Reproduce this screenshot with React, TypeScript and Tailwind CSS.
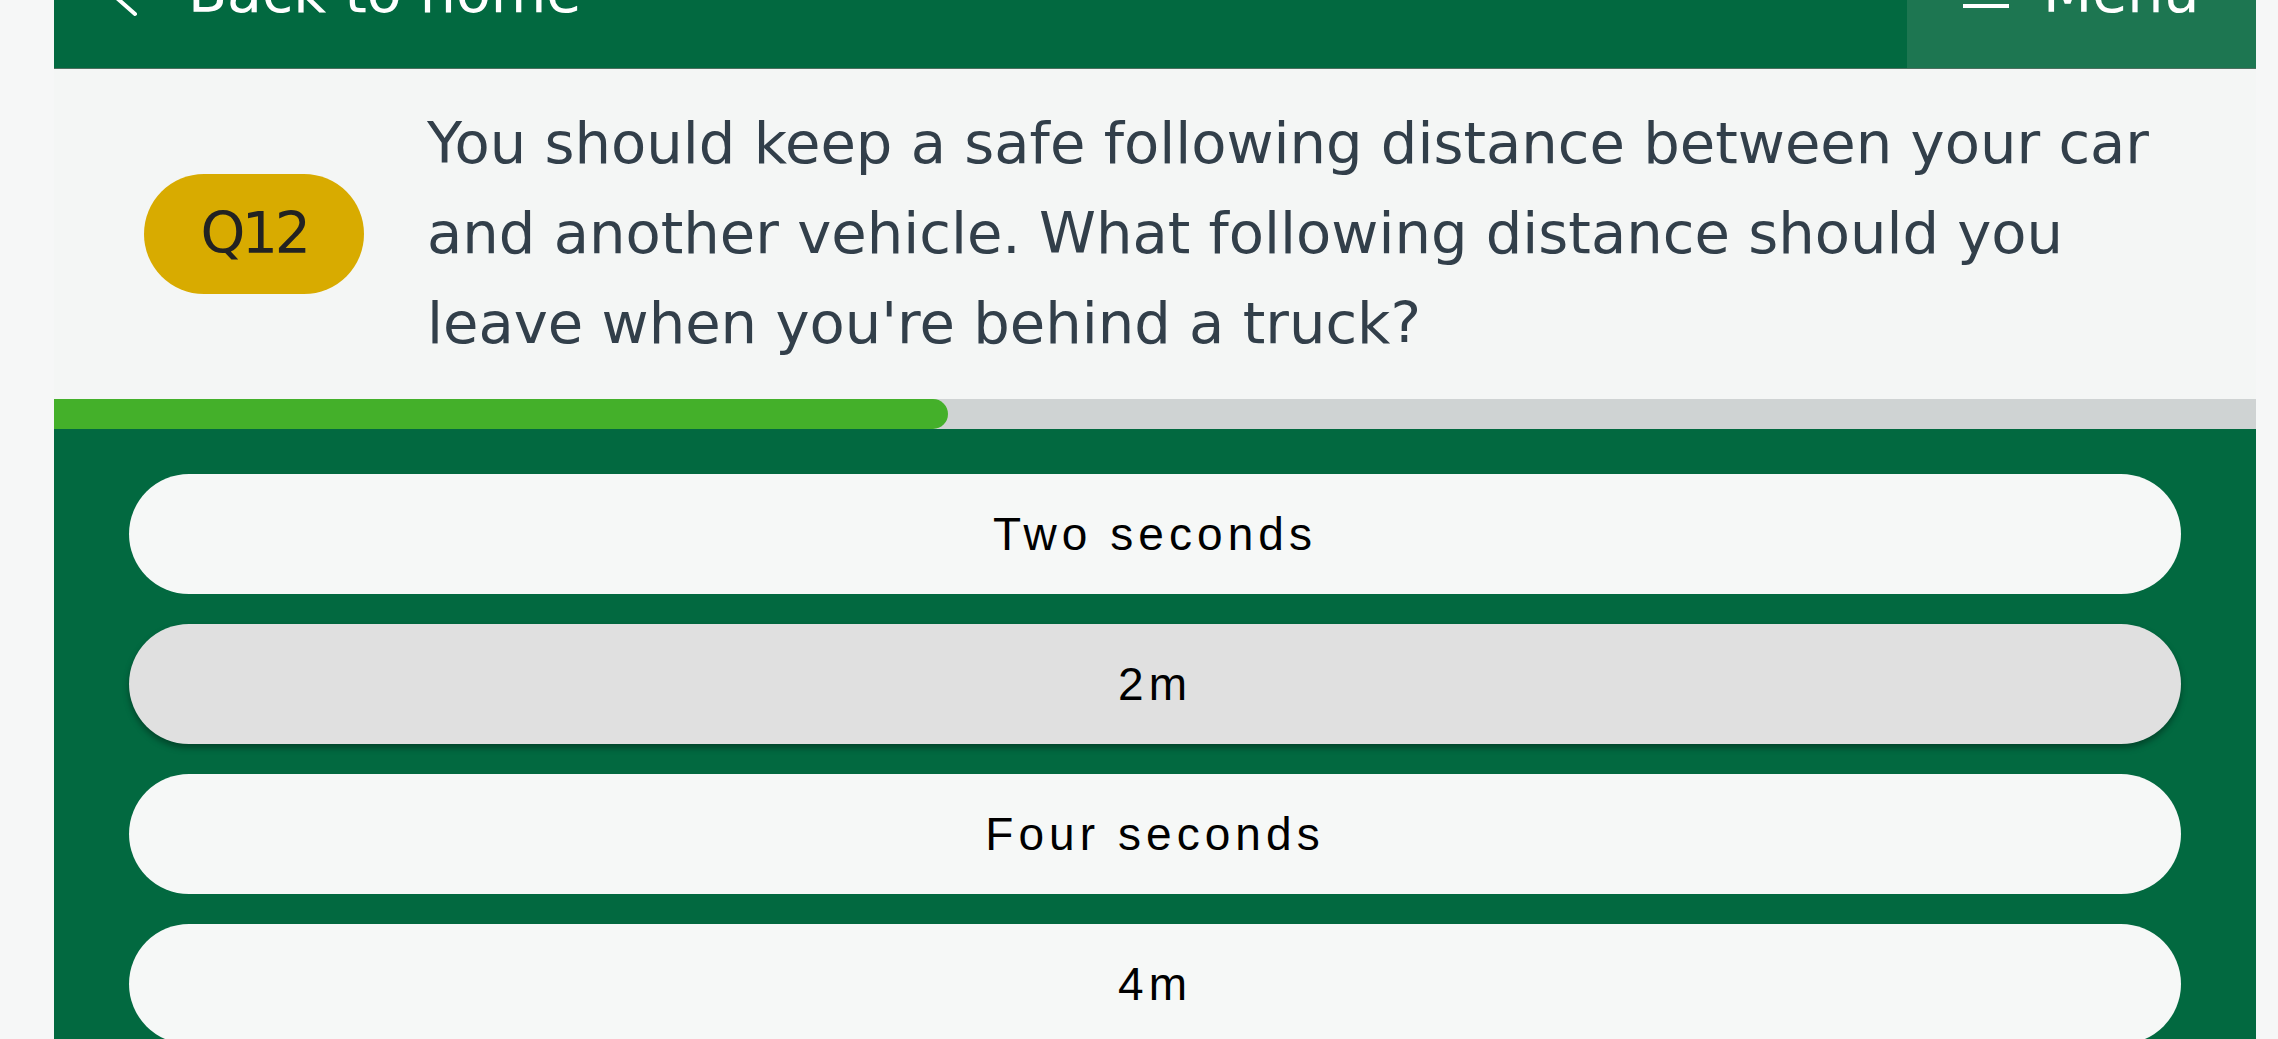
const ANSWERS = [
  { id: "a", label: "Two seconds" },
  { id: "b", label: "2m", selected: true },
  { id: "c", label: "Four seconds" },
  { id: "d", label: "4m" },
];

const FONT = "font-['DejaVu_Sans','Liberation_Sans',sans-serif]";

function Header() {
  return (
    <header className="flex h-[69px] items-start justify-between overflow-hidden border-b border-[#4f6f60] bg-[#026940] text-white">
      <a
        href="#"
        className={`-mt-[40px] flex items-center gap-[50px] pl-[52px] text-[57px] leading-[64px] ${FONT}`}
      >
        <svg width="32" height="50" viewBox="0 0 32 50" fill="none">
          <polyline
            points="29,3 4,25 29,47"
            stroke="white"
            strokeWidth="4"
            strokeLinecap="round"
            strokeLinejoin="round"
          />
        </svg>
        <span>Back to home</span>
      </a>
      <button
        type="button"
        className="flex h-full w-[349px] items-start bg-[#1d7651] pl-[56px]"
      >
        <span
          className={`-mt-[40px] flex items-center gap-[34px] text-[57px] leading-[64px] ${FONT}`}
        >
          <svg width="46" height="36" viewBox="0 0 46 36" fill="none">
            <path d="M0 4h46M0 18h46M0 32h46" stroke="white" strokeWidth="4" />
          </svg>
          <span>Menu</span>
        </span>
      </button>
    </header>
  );
}

function Question() {
  return (
    <section className="flex items-center gap-[63px] bg-[#f4f6f5] py-[30px] pl-[90px] pr-[40px]">
      <div
        className={`flex h-[120px] w-[220px] shrink-0 items-center justify-center rounded-full bg-[#d8ab00] text-[57px] tracking-[-0.06em] text-[#222222] ${FONT}`}
      >
        Q12
      </div>
      <p className={`flex-1 text-[57.6px] leading-[90px] text-[#323f4a] ${FONT}`}>
        You should keep a safe following distance between your car and another
        vehicle. What following distance should you leave when you're behind a
        truck?
      </p>
    </section>
  );
}

function Progress() {
  return (
    <div className="h-[30px] bg-[#cfd3d3]">
      <div className="h-full w-[40.6%] rounded-r-full bg-[#44b02a]" />
    </div>
  );
}

export default function App() {
  return (
    <div className="h-screen overflow-hidden bg-[#f6f7f7]">
      <div className="ml-[54px] w-[2202px]">
        <Header />
        <Question />
        <Progress />
        <div className="flex flex-col gap-[30px] bg-[#026940] px-[75px] pb-[60px] pt-[45px]">
          {ANSWERS.map((a) => (
            <button
              key={a.id}
              type="button"
              className={`flex h-[120px] items-center justify-center rounded-full font-['Liberation_Sans',Arial,sans-serif] text-[46px] tracking-[0.11em] text-black ${
                a.selected
                  ? "bg-[#e0e0e0] shadow-[0_4px_6px_rgba(0,0,0,0.35)]"
                  : "bg-[#f6f8f7]"
              }`}
            >
              {a.label}
            </button>
          ))}
        </div>
      </div>
    </div>
  );
}
